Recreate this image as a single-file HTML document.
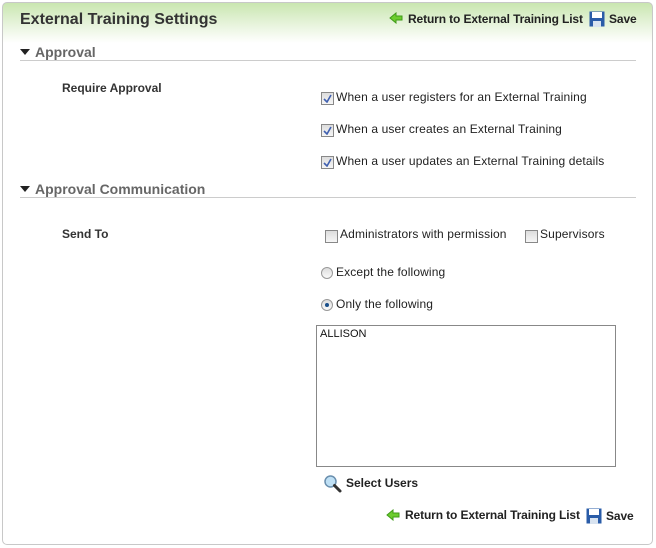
<!DOCTYPE html>
<html><head><meta charset="utf-8"><style>
body{margin:0;width:656px;height:548px;background:#fff;font-family:"Liberation Sans",Arial,sans-serif;color:#222;position:relative;overflow:hidden}
.panel{position:absolute;left:2px;top:2px;width:649px;height:541px;border:1px solid #c8c8c8;border-radius:5px;background:linear-gradient(#c9e6b0 0,#e8f4dd 22px,#fff 40px,#fff 100%)}
.a{position:absolute;white-space:nowrap}
.t{font-size:16px;font-weight:bold;color:#333;left:20px;top:11px}
.lnk{font-size:12px;font-weight:bold;color:#222;letter-spacing:-0.12px}
.sec{font-size:14px;font-weight:bold;color:#666}
.tri{width:0;height:0;border-left:5px solid transparent;border-right:5px solid transparent;border-top:6px solid #222}
.line{position:absolute;left:20px;width:616px;height:1px;background:#ccc}
.lab{font-size:12px;font-weight:bold;color:#333}
.opt{font-size:12px;color:#222;letter-spacing:0.13px}
.cb{position:absolute;width:11px;height:11px;border:1px solid #888;background:linear-gradient(#ddd,#f6f6f6)}
.rb{position:absolute;width:10px;height:10px;border:1px solid #999;border-radius:50%;background:linear-gradient(#ddd,#fafafa)}
</style></head><body>
<div class="panel"></div>
<div class="a t">External Training Settings</div>
<svg class="a" style="left:389px;top:12px" width="14" height="12" viewBox="0 0 14 12"><path d="M1 6 L7 1 V4 H13 V8 H7 V11 Z" fill="#6ccd2e" stroke="#3f9a18" stroke-width="1"/></svg>
<div class="a lnk" style="left:408px;top:12px">Return to External Training List</div>
<svg class="a" style="left:589px;top:11px" width="16" height="16" viewBox="0 0 16 16"><rect x="0.5" y="0.5" width="15" height="15" fill="#2a5ca8"/><rect x="3" y="1" width="10" height="6" fill="#fff"/><rect x="4" y="10" width="8" height="6" fill="#d8e3f0"/></svg>
<div class="a lnk" style="left:609px;top:12px">Save</div>

<div class="a tri" style="left:20px;top:49px"></div>
<div class="a sec" style="left:35px;top:44px">Approval</div>
<div class="line" style="top:60px"></div>

<div class="a lab" style="left:62px;top:81px">Require Approval</div>
<div class="cb" style="left:321px;top:92px"></div><svg class="a" style="left:323px;top:94px" width="9" height="9"><path d="M1 5 L4 8 L8 1" stroke="#4060b0" stroke-width="1.6" fill="none"/></svg>
<div class="a opt" style="left:336px;top:90px">When a user registers for an External Training</div>
<div class="cb" style="left:321px;top:124px"></div><svg class="a" style="left:323px;top:126px" width="9" height="9"><path d="M1 5 L4 8 L8 1" stroke="#4060b0" stroke-width="1.6" fill="none"/></svg>
<div class="a opt" style="left:336px;top:122px">When a user creates an External Training</div>
<div class="cb" style="left:321px;top:156px"></div><svg class="a" style="left:323px;top:158px" width="9" height="9"><path d="M1 5 L4 8 L8 1" stroke="#4060b0" stroke-width="1.6" fill="none"/></svg>
<div class="a opt" style="left:336px;top:154px">When a user updates an External Training details</div>

<div class="a tri" style="left:20px;top:186px"></div>
<div class="a sec" style="left:35px;top:181px">Approval Communication</div>
<div class="line" style="top:197px"></div>

<div class="a lab" style="left:62px;top:227px">Send To</div>
<div class="cb" style="left:325px;top:230px"></div>
<div class="a opt" style="left:340px;top:227px">Administrators with permission</div>
<div class="cb" style="left:525px;top:230px"></div>
<div class="a opt" style="left:540px;top:227px">Supervisors</div>

<div class="rb" style="left:321px;top:267px"></div>
<div class="a opt" style="left:336px;top:265px">Except the following</div>
<div class="rb" style="left:321px;top:299px"></div><div class="a" style="left:325px;top:303px;width:4px;height:4px;border-radius:50%;background:#1a4f8a"></div>
<div class="a opt" style="left:336px;top:297px">Only the following</div>

<div class="a" style="left:316px;top:325px;width:298px;height:140px;border:1px solid #888;background:#fff"></div>
<div class="a" style="left:320px;top:328px;font-size:11px;color:#111">ALLISON</div>

<svg class="a" style="left:323px;top:474px" width="20" height="20" viewBox="0 0 20 20"><circle cx="7.5" cy="7.5" r="5.5" fill="#bfe0f5" stroke="#6a8fae" stroke-width="1.5"/><path d="M11.5 11.5 L17 17" stroke="#333" stroke-width="3" stroke-linecap="round"/></svg>
<div class="a lnk" style="left:346px;top:476px;letter-spacing:0">Select Users</div>

<svg class="a" style="left:386px;top:509px" width="14" height="12" viewBox="0 0 14 12"><path d="M1 6 L7 1 V4 H13 V8 H7 V11 Z" fill="#6ccd2e" stroke="#3f9a18" stroke-width="1"/></svg>
<div class="a lnk" style="left:405px;top:508px">Return to External Training List</div>
<svg class="a" style="left:586px;top:508px" width="16" height="16" viewBox="0 0 16 16"><rect x="0.5" y="0.5" width="15" height="15" fill="#2a5ca8"/><rect x="3" y="1" width="10" height="6" fill="#fff"/><rect x="4" y="10" width="8" height="6" fill="#d8e3f0"/></svg>
<div class="a lnk" style="left:606px;top:509px">Save</div>
</body></html>
